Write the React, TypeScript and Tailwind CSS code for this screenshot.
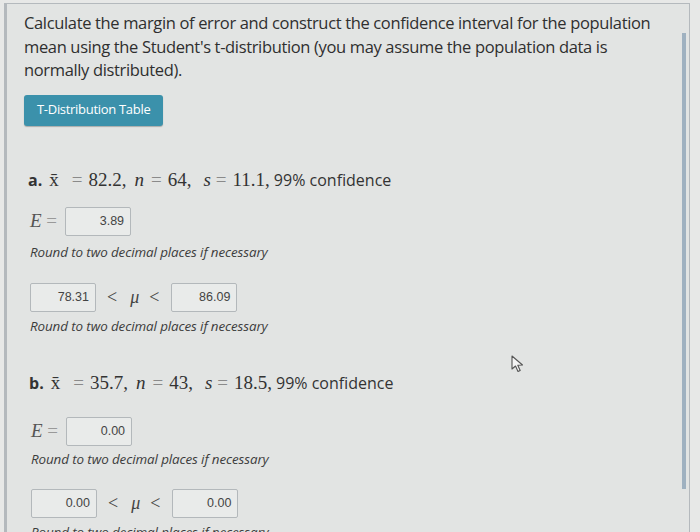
import React from 'react'

const serif = { fontFamily: '"Liberation Serif", "Times New Roman", serif' }

function AnswerBox({ value, className = '' }: { value: string; className?: string }) {
  return (
    <div
      className={`h-[29px] w-[66px] border border-[#b3b8bb] bg-[#e9ebea] rounded-[2px] flex items-center justify-end pr-[6px] text-[12.5px] text-[#444] ${className}`}
      style={{ fontFamily: '"Liberation Sans", Arial, sans-serif' }}
    >
      {value}
    </div>
  )
}

function Hint() {
  return <p className="italic text-[13.4px] text-[#3c3c3c] tracking-[-0.1px]">Round to two decimal places if necessary</p>
}

function Eq({ l = 6, r = 5 }: { l?: number; r?: number }) {
  return (
    <span className="text-[#8a8a8a]" style={{ marginLeft: l, marginRight: r }}>
      =
    </span>
  )
}

type PartProps = {
  label: string
  xbar: string
  n: string
  s: string
  e: string
  lo: string
  hi: string
  wide?: boolean
}

function Part({ label, xbar, n, s, e, lo, hi, wide }: PartProps) {
  return (
    <div>
      <div className="flex items-baseline text-[16px] text-[#333] h-[24px]">
        <span className="font-bold mr-[7px]">{label}</span>
        <span className="text-[19px] whitespace-pre" style={serif}>
          x̄<Eq l={13} r={6} />
          {xbar},<i className="ml-[8px]">n</i>
          <Eq l={7} r={6} />
          {n},<i className="ml-[12px]">s</i>
          <Eq l={5} r={6} />
          {s},
        </span>
        <span className="ml-[4px]">99% confidence</span>
      </div>
      <div className={`flex items-center ml-[2px] ${wide ? 'mt-[24px]' : 'mt-[17px]'}`}>
        <span className="text-[19px] text-[#555] mr-[8px] whitespace-pre" style={serif}>
          <i>E</i> <span className="text-[#999]">=</span>
        </span>
        <AnswerBox value={e} />
      </div>
      <div className={`ml-[2px] ${wide ? 'mt-[3px]' : 'mt-[6px]'}`}>
        <Hint />
      </div>
      <div className={`flex items-center ml-[2px] ${wide ? 'mt-[20px]' : 'mt-[21px]'}`}>
        <AnswerBox value={lo} />
        <span className="text-[18px] text-[#444] ml-[11px] mr-[12px] flex items-center" style={serif}>
          <span>{'<'}</span>
          <i className="ml-[13px] mr-[10px]">μ</i>
          <span>{'<'}</span>
        </span>
        <AnswerBox value={hi} />
      </div>
      <div className="mt-[4px] ml-[2px]">
        <Hint />
      </div>
    </div>
  )
}

export default function App() {
  return (
    <div
      className="relative w-[700px] h-[532px] overflow-hidden bg-[#e7e8e7] pl-[4px] pt-[3px]"
      style={{ fontFamily: '"Open Sans", "Noto Sans", sans-serif' }}
    >
      <div className="flex h-[600px] w-[686px] border-l-[3px] border-t border-r border-[#b4b9bd] bg-[#e2e4e3]">
        <div className="flex-1 pl-[17px] pt-[7px]">
          <h1 className="text-[16.5px] leading-[23.5px] text-[#2f2f2f] tracking-[-0.35px] w-[640px]">
            Calculate the margin of error and construct the confidence interval for the population mean using the
            Student's t-distribution (you may assume the population data is normally distributed).
          </h1>

          <button className="mt-[13px] h-[31px] px-[13px] rounded-[3px] bg-[#3b91ab] text-white text-[13px] tracking-[-0.3px] shadow-[0_1px_1px_rgba(0,0,0,0.25)]">
            T-Distribution Table
          </button>

          <div className="mt-[40px] ml-[4px]">
            <Part label="a." xbar="82.2" n="64" s="11.1" e="3.89" lo="78.31" hi="86.09" />
          </div>

          <div className="mt-[33px] ml-[5px]">
            <Part label="b." xbar="35.7" n="43" s="18.5" e="0.00" lo="0.00" hi="0.00" wide />
          </div>
        </div>
        <div className="w-[4px] mr-[3px] mt-[29px] h-[456px] bg-[#9fb1c0]" />
      </div>

      {/* mouse pointer */}
      <svg className="absolute left-[511px] top-[355px]" width="14" height="18" viewBox="0 0 14 18">
        <path d="M1 1 L1 14 L4.5 11 L7 16.5 L9.2 15.5 L6.8 10.2 L11.5 10 Z" fill="#f4f4f4" stroke="#555" strokeWidth="1.1" strokeLinejoin="round" />
      </svg>
    </div>
  )
}
